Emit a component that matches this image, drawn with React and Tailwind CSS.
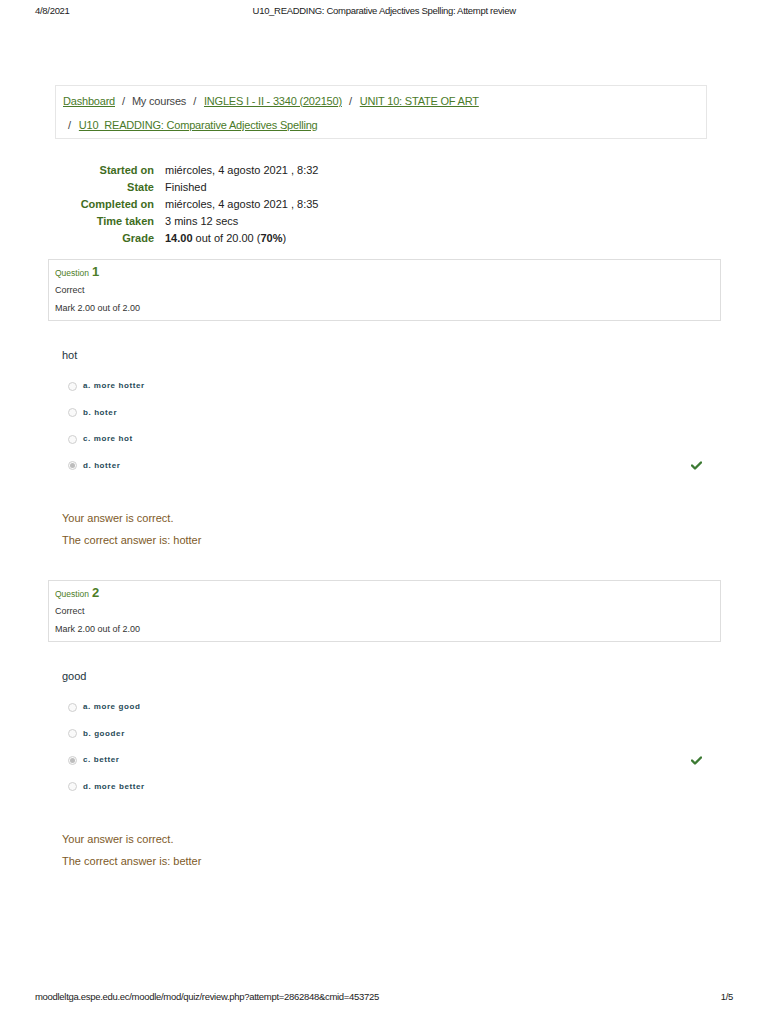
import React from 'react';

const Radio = ({ checked }) => (
  <span className="w-[9px] h-[9px] rounded-full border border-[#cfcfcf] bg-[#fafafa] flex items-center justify-center shrink-0">
    {checked && <span className="w-[5px] h-[5px] rounded-full bg-[#bdbdbd]" />}
  </span>
);

const Check = () => (
  <svg width="11" height="9" viewBox="0 0 11 9">
    <polyline points="1,4.5 4,7.5 10,1.5" fill="none" stroke="#3c7a33" strokeWidth="2.4" strokeLinecap="round" strokeLinejoin="round" />
  </svg>
);

const Question = ({ num, prompt, options, answer, correctText }) => (
  <div className="flex flex-col">
    <div className="ml-[48px] w-[673px] h-[62px] border border-[#dedede] pl-[6px] pt-[5px] flex flex-col">
      <div className="flex items-baseline gap-[3px] text-[#4c7d27] h-[14px]">
        <span className="text-[8.5px]">Question</span>
        <span className="text-[13px] font-bold leading-none">{num}</span>
      </div>
      <div className="text-[9px] text-[#333] mt-[5px] h-[18px]">Correct</div>
      <div className="text-[9px] text-[#333]">Mark 2.00 out of 2.00</div>
    </div>
    <div className="ml-[62px] mt-[27px] text-[11px] text-[#1d3440] h-[14px] leading-[14px]">{prompt}</div>
    <div className="flex flex-col mt-[11px]">
      {options.map((o, i) => (
        <div key={o} className="flex items-center h-[26.5px] pl-[68px] w-[702px]">
          <Radio checked={i === answer} />
          <span className="ml-[6px] text-[8px] font-bold tracking-[0.6px] text-[#264a58]">{o}</span>
          {i === answer && (
            <span className="ml-auto">
              <Check />
            </span>
          )}
        </div>
      ))}
    </div>
    <div className="ml-[62px] mt-[32px] text-[11px] text-[#7d5a28] leading-[14px]">Your answer is correct.</div>
    <div className="ml-[62px] mt-[8px] text-[11px] text-[#7d5a28] leading-[14px]">The correct answer is: {correctText}</div>
  </div>
);

const rows = [
  ['Started on', 'miércoles, 4 agosto 2021 , 8:32'],
  ['State', 'Finished'],
  ['Completed on', 'miércoles, 4 agosto 2021 , 8:35'],
  ['Time taken', '3 mins 12 secs'],
];

export default function App() {
  return (
    <div className="w-[768px] h-[1024px] bg-white flex flex-col font-['Liberation_Sans',Arial,sans-serif] text-[#222]">
      {/* print header */}
      <div className="flex h-[20px] pt-[4px] text-[9.5px] tracking-[-0.3px] text-[#222]">
        <span className="ml-[35px]">4/8/2021</span>
        <span className="ml-[183px]">U10_READDING: Comparative Adjectives Spelling: Attempt review</span>
      </div>

      {/* breadcrumb */}
      <div className="ml-[55px] mt-[65px] w-[652px] h-[54px] border border-[#e6e6e6] pl-[7px] flex flex-col text-[11px] tracking-[-0.2px]">
        <div className="flex items-center h-[14px] mt-[8px] gap-[7px]">
          <a className="text-[#4a7a28] underline">Dashboard</a>
          <span className="text-[#444]">/</span>
          <span className="text-[#444]">My courses</span>
          <span className="text-[#444]">/</span>
          <a className="text-[#4a7a28] underline ml-[1px]">INGLES I - II - 3340 (202150)</a>
          <span className="text-[#444]">/</span>
          <a className="text-[#4a7a28] underline ml-[1px]">UNIT 10: STATE OF ART</a>
        </div>
        <div className="flex items-center h-[14px] mt-[10px] gap-[8px] pl-[5px]">
          <span className="text-[#444]">/</span>
          <a className="text-[#4a7a28] underline">U10_READDING: Comparative Adjectives Spelling</a>
        </div>
      </div>

      {/* summary */}
      <div className="mt-[23px] flex flex-col text-[11px]">
        {rows.map(([k, v]) => (
          <div key={k} className="flex h-[17px] items-center">
            <span className="w-[154px] text-right font-bold text-[#3f6d1e]">{k}</span>
            <span className="ml-[11px] text-[#222]">{v}</span>
          </div>
        ))}
        <div className="flex h-[17px] items-center">
          <span className="w-[154px] text-right font-bold text-[#3f6d1e]">Grade</span>
          <span className="ml-[11px] text-[#222]">
            <b>14.00</b> out of 20.00 (<b>70%</b>)
          </span>
        </div>
      </div>

      <div className="mt-[12px]">
        <Question
          num="1"
          prompt="hot"
          options={['a. more hotter', 'b. hoter', 'c. more hot', 'd. hotter']}
          answer={3}
          correctText="hotter"
        />
      </div>

      <div className="mt-[33px]">
        <Question
          num="2"
          prompt="good"
          options={['a. more good', 'b. gooder', 'c. better', 'd. more better']}
          answer={2}
          correctText="better"
        />
      </div>

      {/* print footer */}
      <div className="mt-auto mb-[20px] flex text-[9.5px] tracking-[-0.3px] text-[#222]">
        <span className="ml-[35px]">moodleltga.espe.edu.ec/moodle/mod/quiz/review.php?attempt=2862848&amp;cmid=453725</span>
        <span className="ml-auto mr-[35px]">1/5</span>
      </div>
    </div>
  );
}
